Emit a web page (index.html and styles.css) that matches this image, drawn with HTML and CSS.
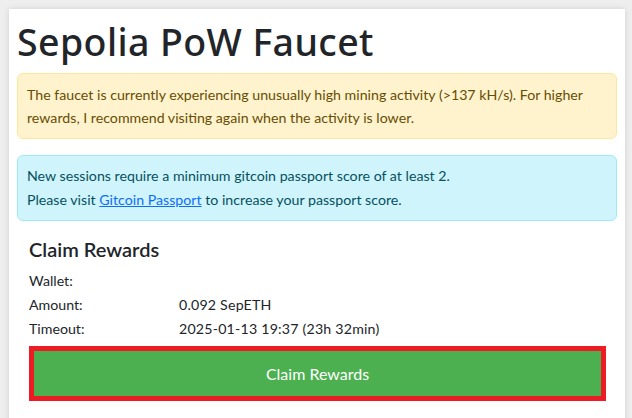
FILE: index.html
```html
<!DOCTYPE html>
<html lang="en">
<head>
<meta charset="utf-8">
<title>Sepolia PoW Faucet</title>
<link rel="stylesheet" href="styles.css">
</head>
<body>
<div class="page">
  <h1 class="title">Sepolia PoW Faucet</h1>
  <div class="alert alert-warning">The faucet is currently experiencing unusually high mining activity (&gt;137 kH/s). For higher rewards, I recommend visiting again when the activity is lower.</div>
  <div class="alert alert-info">
    <div>New sessions require a minimum gitcoin passport score of at least 2.</div>
    <div>Please visit <a class="link" href="#">Gitcoin Passport</a> to increase your passport score.</div>
  </div>
  <div class="claim">
    <h4 class="claim-title">Claim Rewards</h4>
    <div class="row"><span class="label">Wallet:</span><span class="value"></span></div>
    <div class="row"><span class="label">Amount:</span><span class="value">0.092 SepETH</span></div>
    <div class="row"><span class="label">Timeout:</span><span class="value">2025-01-13 19:37 (23h 32min)</span></div>
    <button class="claim-btn">Claim Rewards</button>
  </div>
</div>
</body>
</html>
```
FILE: styles.css
```css
html, body {
  margin: 0;
  padding: 0;
}
body {
  background: #eeeeee;
  font-family: Lato, "Noto Sans", sans-serif;
  color: #212529;
  font-size: 14.2px;
  padding: 9px 7px 0 9px;
  height: 418px;
  box-sizing: border-box;
  overflow: hidden;
}
.page {
  background: #ffffff;
  box-shadow: 0 0 6px rgba(0, 0, 0, 0.12);
  padding: 11px 8px 40px 8px;
}
.title {
  margin: 0 0 9px 0;
  font-family: "Noto Sans", Lato, sans-serif;
  font-size: 37.5px;
  line-height: 44px;
  font-weight: 500;
  letter-spacing: 0.4px;
  color: #212529;
}
.alert {
  border: 1px solid;
  border-radius: 6px;
  padding: 9px 9px;
  line-height: 23px;
}
.alert-warning {
  background: #fff3cd;
  border-color: #ffe69c;
  color: #664d03;
}
.alert-info {
  margin-top: 16px;
  padding: 8px 9px;
  line-height: 24px;
  background: #cff4fc;
  border-color: #9eeaf9;
  color: #055160;
}
.link {
  color: #0d6efd;
  text-decoration: underline;
}
.claim {
  padding: 16px 11px 0 12px;
}
.claim-title {
  margin: 0 0 8px 0;
  font-size: 20px;
  line-height: 24px;
  font-weight: 600;
}
.row {
  display: flex;
  line-height: 24px;
}
.label {
  width: 150px;
  flex: none;
}
.value {
  letter-spacing: 0.2px;
}
.claim-btn {
  display: block;
  width: 100%;
  margin-top: 5px;
  height: 55px;
  border: 5px solid #ed1c24;
  background: #4caf50;
  color: #ffffff;
  font-family: Lato, "Noto Sans", sans-serif;
  font-size: 16px;
  padding: 0;
}
```
